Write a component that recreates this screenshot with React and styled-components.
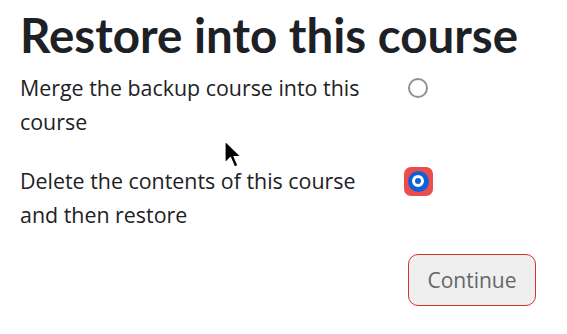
import React from 'react';
import styled, { createGlobalStyle } from 'styled-components';

const Global = createGlobalStyle`
  html, body {
    margin: 0;
    background: #fff;
  }
  body {
    font-family: "Open Sans", "Noto Sans", sans-serif;
    color: #1d2125;
  }
`;

const Page = styled.div`
  position: relative;
  width: 567px;
  height: 334px;
  padding: 7px 20px 0;
  box-sizing: border-box;
  overflow: hidden;
`;

const Title = styled.h2`
  margin: 0 0 9px;
  font-family: Lato, "Open Sans", sans-serif;
  font-size: 47.5px;
  line-height: 55px;
  font-weight: 700;
  white-space: nowrap;
`;

const Option = styled.div`
  display: flex;
  align-items: flex-start;
  margin-bottom: 25px;
`;

const Label = styled.label`
  width: 370px;
  font-size: 21.4px;
  line-height: 34px;
`;

const RadioCell = styled.div`
  width: 56px;
  height: 34px;
  display: flex;
  align-items: center;
  justify-content: center;
`;

const Radio = styled.span`
  box-sizing: border-box;
  width: 20px;
  height: 20px;
  border-radius: 50%;
  border: 2.5px solid #8f9099;
  background: #fff;
`;

const FocusRing = styled.span`
  width: 29px;
  height: 29px;
  border-radius: 7px;
  background: #ec4c4c;
  display: flex;
  align-items: center;
  justify-content: center;
`;

const CheckedRadio = styled.span`
  box-sizing: border-box;
  width: 21px;
  height: 21px;
  border-radius: 50%;
  background: #0e62d9;
  display: flex;
  align-items: center;
  justify-content: center;

  &::before {
    content: '';
    width: 6px;
    height: 6px;
    border-radius: 50%;
    border: 3px solid #fff;
    background: #0e62d9;
  }
`;

const Actions = styled.div`
  display: flex;
  justify-content: flex-end;
  padding-right: 11px;
  margin-top: -3px;
`;

const Button = styled.button`
  font-family: "Open Sans", "Noto Sans", sans-serif;
  font-size: 21px;
  color: #666;
  background: #efefef;
  border: 1px solid #e0302a;
  border-radius: 10px;
  width: 128px;
  height: 52px;
  padding: 0;
`;

const Cursor = styled.svg`
  position: absolute;
  left: 224px;
  top: 140px;
`;

export default function App() {
  return (
    <>
      <Global />
      <Page>
        <Title>Restore into this course</Title>
        <Option>
          <Label>Merge the backup course into this course</Label>
          <RadioCell>
            <Radio />
          </RadioCell>
        </Option>
        <Option>
          <Label>Delete the contents of this course and then restore</Label>
          <RadioCell>
            <FocusRing>
              <CheckedRadio />
            </FocusRing>
          </RadioCell>
        </Option>
        <Actions>
          <Button>Continue</Button>
        </Actions>
        <Cursor width="20" height="30" viewBox="0 0 20 30">
          <path d="M1 1 L1 23 L6.5 17.5 L10.5 27 L14 25.5 L10 16.5 L17 16.5 Z" fill="#000" stroke="#fff" strokeWidth="1.2" strokeLinejoin="round" />
        </Cursor>
      </Page>
    </>
  );
}
